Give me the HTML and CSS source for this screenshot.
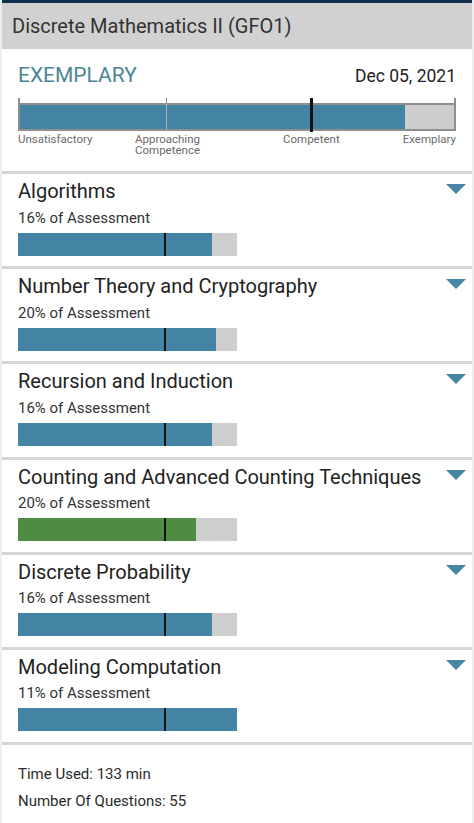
FILE: index.html
```html
<!DOCTYPE html>
<html>
<head>
<meta charset="utf-8">
<link rel="stylesheet" href="styles.css">
</head>
<body>
<div class="page">
  <div class="topbar"></div>
  <header class="header">Discrete Mathematics II (GFO1)</header>
  <section class="summary">
    <div class="summary-head">
      <span class="level">EXEMPLARY</span>
      <span class="date">Dec 05, 2021</span>
    </div>
    <div class="scale">
      <div class="scale-bar">
        <div class="scale-fill" style="width:88.6%"></div>
        <div class="scale-rest"></div>
      </div>
      <span class="tick tick-start"></span>
      <span class="tick tick-approach"></span>
      <span class="tick tick-end"></span>
      <span class="scale-divider"></span>
      <span class="scale-marker"></span>
    </div>
    <div class="scale-labels">
      <span class="lbl lbl-unsat">Unsatisfactory</span>
      <span class="lbl lbl-approach">Approaching Competence</span>
      <span class="lbl lbl-comp">Competent</span>
      <span class="lbl lbl-exem">Exemplary</span>
    </div>
  </section>

  <section class="topic">
    <div class="topic-head"><h2 class="topic-title">Algorithms</h2><span class="caret"></span></div>
    <div class="topic-weight">16% of Assessment</div>
    <div class="bar"><div class="bar-fill" style="width:88.6%"></div><span class="bar-marker"></span></div>
  </section>

  <section class="topic">
    <div class="topic-head"><h2 class="topic-title">Number Theory and Cryptography</h2><span class="caret"></span></div>
    <div class="topic-weight">20% of Assessment</div>
    <div class="bar"><div class="bar-fill" style="width:90.4%"></div><span class="bar-marker"></span></div>
  </section>

  <section class="topic">
    <div class="topic-head"><h2 class="topic-title">Recursion and Induction</h2><span class="caret"></span></div>
    <div class="topic-weight">16% of Assessment</div>
    <div class="bar"><div class="bar-fill" style="width:88.6%"></div><span class="bar-marker"></span></div>
  </section>

  <section class="topic">
    <div class="topic-head"><h2 class="topic-title">Counting and Advanced Counting Techniques</h2><span class="caret"></span></div>
    <div class="topic-weight">20% of Assessment</div>
    <div class="bar"><div class="bar-fill bar-fill-green" style="width:81.3%"></div><span class="bar-marker"></span></div>
  </section>

  <section class="topic">
    <div class="topic-head"><h2 class="topic-title">Discrete Probability</h2><span class="caret"></span></div>
    <div class="topic-weight">16% of Assessment</div>
    <div class="bar"><div class="bar-fill" style="width:88.6%"></div><span class="bar-marker"></span></div>
  </section>

  <section class="topic">
    <div class="topic-head"><h2 class="topic-title">Modeling Computation</h2><span class="caret"></span></div>
    <div class="topic-weight">11% of Assessment</div>
    <div class="bar"><div class="bar-fill" style="width:100%"></div><span class="bar-marker"></span></div>
  </section>

  <section class="stats">
    <div class="stat">Time Used: 133 min</div>
    <div class="stat">Number Of Questions: 55</div>
  </section>
</div>
</body>
</html>
```

FILE: styles.css
```css
* { box-sizing: border-box; }

html, body {
  margin: 0;
  padding: 0;
  background: #ffffff;
}

body {
  font-family: Roboto, "Liberation Sans", sans-serif;
  color: #2a2a2a;
}

.page {
  width: 474px;
  height: 823px;
  overflow: hidden;
  border-left: 2px solid #eeeeee;
  border-right: 2px solid #eeeeee;
}

.topbar {
  height: 3px;
  background: #0f2f4e;
  margin: 0 -2px;
}

.header {
  height: 46px;
  margin: 0 -2px;
  background: #d1d1d1;
  padding: 0 0 0 12px;
  font-size: 20px;
  line-height: 46px;
  color: #333333;
  display: flex;
  align-items: center;
}

.summary {
  padding: 12px 16px 0 16px;
  height: 122px;
}

.summary-head {
  display: flex;
  justify-content: space-between;
  align-items: baseline;
  height: 28px;
  line-height: 28px;
}

.level {
  font-size: 21px;
  color: #4b8594;
}

.date {
  font-size: 17.5px;
  color: #222222;
  margin-right: 0;
}

.scale {
  position: relative;
  margin-top: 9px;
  height: 34px;
  width: 438px;
}

.scale-bar {
  position: absolute;
  left: 0;
  right: 0;
  top: 5px;
  height: 28px;
  border: 2px solid #8f8f8f;
  display: flex;
}

.scale-fill {
  background: #4384a4;
  height: 100%;
}

.scale-rest {
  flex: 1;
  background: #cdcdcd;
}

.tick {
  position: absolute;
  top: 0;
  width: 2px;
  height: 6px;
  background: #8f8f8f;
}

.tick-start { left: 0; }
.tick-approach { left: 148px; width: 1px; }
.tick-end { right: 0; }

.scale-divider {
  position: absolute;
  left: 148px;
  top: 6px;
  width: 1px;
  height: 26px;
  background: #a9b5bb;
}

.scale-marker {
  position: absolute;
  left: 292px;
  top: 0;
  width: 3px;
  height: 34px;
  background: #111111;
}

.scale-labels {
  position: relative;
  width: 438px;
  height: 23px;
  margin-top: 2px;
  font-size: 11.5px;
  line-height: 10.5px;
  color: #6a6a6a;
}

.lbl {
  position: absolute;
  top: 0;
}

.lbl-unsat { left: 0; }
.lbl-approach { left: 117px; width: 72px; }
.lbl-comp { left: 265px; }
.lbl-exem { right: 0; }

.topic {
  border-top: 3px solid #d5d5d5;
  padding: 5px 6px 10.7px 16px;
}

.topic-head {
  display: flex;
  justify-content: space-between;
  align-items: flex-start;
}

.topic-title {
  margin: 0;
  font-size: 20px;
  font-weight: 400;
  line-height: 24px;
  color: #222222;
}

.caret {
  width: 0;
  height: 0;
  margin-top: 5px;
  flex-shrink: 0;
  border-left: 10.5px solid transparent;
  border-right: 10.5px solid transparent;
  border-top: 10px solid #4886a6;
}

.topic-weight {
  margin-top: 4.5px;
  font-size: 15px;
  line-height: 20px;
  color: #333333;
}

.bar {
  position: relative;
  margin-top: 5px;
  width: 219px;
  height: 23px;
  background: #cecece;
}

.bar-fill {
  height: 100%;
  background: #4384a4;
}

.bar-fill-green {
  background: #4f8b42;
}

.bar-marker {
  position: absolute;
  left: 146px;
  top: 0;
  width: 2px;
  height: 100%;
  background: #111111;
}

.stats {
  border-top: 3px solid #d5d5d5;
  padding: 16px 16px 0 16px;
}

.stat {
  font-size: 15px;
  line-height: 27px;
  color: #2a2a2a;
}
```
